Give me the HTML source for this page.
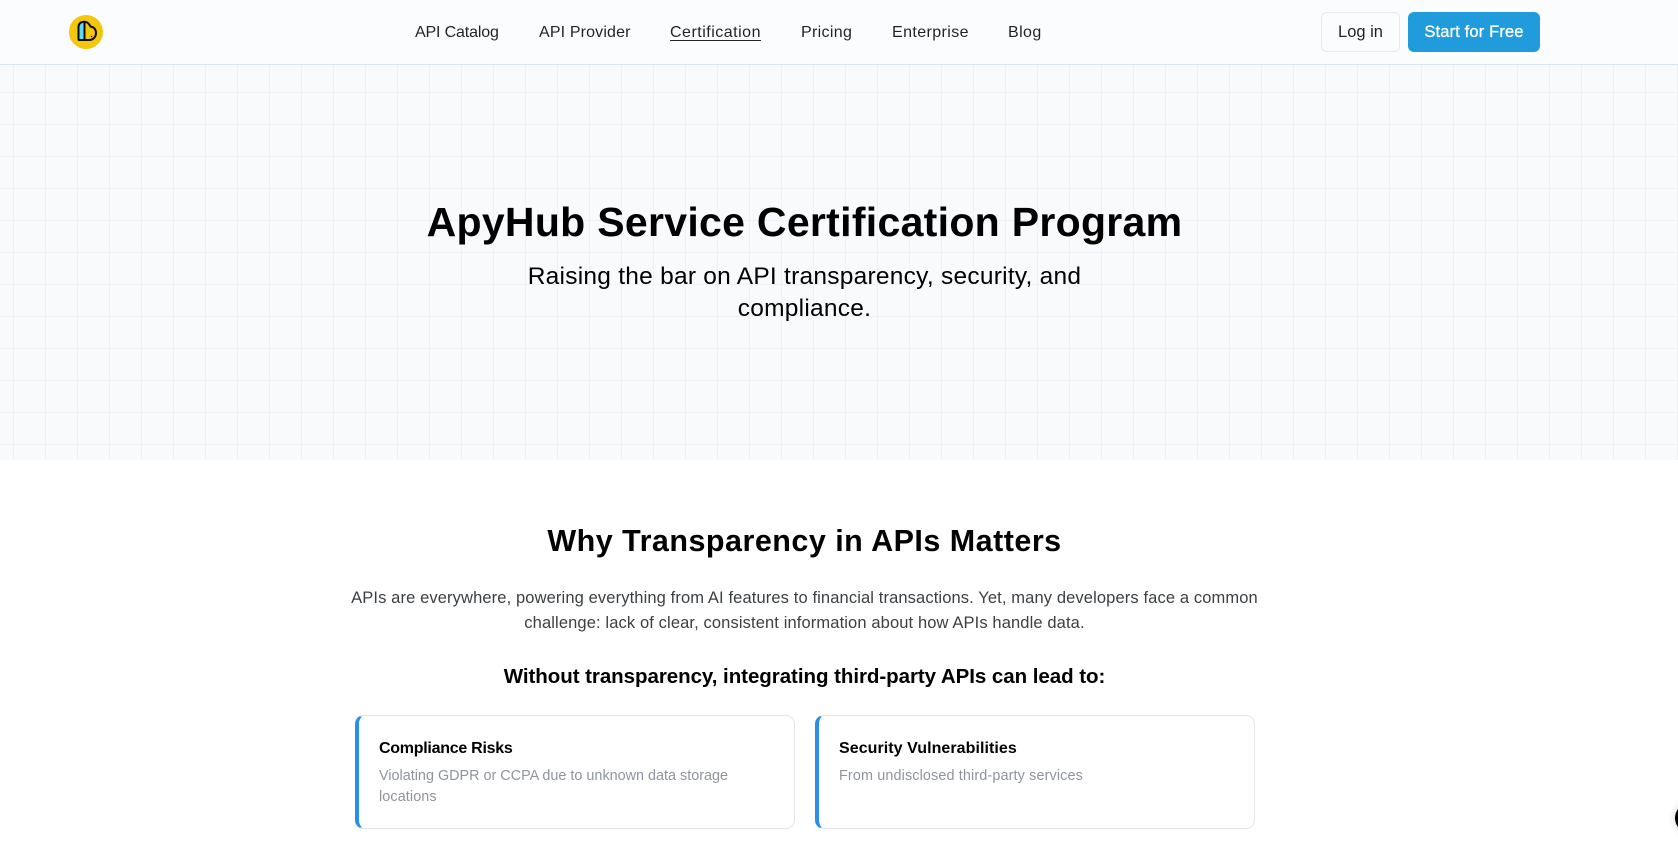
<!DOCTYPE html>
<html lang="en">
<head>
<meta charset="utf-8">
<title>ApyHub Service Certification Program</title>
<style>
html,body{margin:0;padding:0;width:1678px;height:841px;overflow:hidden;background:#fff}
body{position:relative;font-family:"Liberation Sans",Arial,sans-serif;color:#000}
.t{position:absolute;white-space:nowrap;line-height:1}
.c{left:0;width:1609px;text-align:center}
header{position:absolute;left:0;top:0;width:1678px;height:64px;background:#fbfcfe;border-bottom:1px solid #dbe5f0}
.hero{position:absolute;left:0;top:65px;width:1678px;height:395px;background-color:#f9fafc;background-image:linear-gradient(to right,#eef1f5 1px,transparent 1px),linear-gradient(to bottom,#eef1f5 1px,transparent 1px);background-size:32px 32px;background-position:13px 27px}
.nav{font-size:16px;color:#1f2328;top:25px}
.btn{position:absolute;top:12px;height:40px;box-sizing:border-box;border-radius:6px;font-size:16.5px;line-height:38px;text-align:center}
.card{position:absolute;top:715px;height:114px;box-sizing:border-box;background:#fff;border:1px solid #e1e5ec;border-left:4px solid #2b8ee8;border-radius:9px}
.ct{font-size:16px;font-weight:bold;color:#000}
.cd{font-size:14.4px;color:#8f949c}
</style>
</head>
<body>
<div class="hero"></div>
<header></header>
<svg style="position:absolute;left:69px;top:15px" width="34" height="34" viewBox="69 15 34 34">
<circle cx="86" cy="32" r="17" fill="#f4c60c"/>
<path d="M78.500 40V27C78.500 23.500 81 21.700 84.500 21.700V40Z" fill="#5fdcf5"/>
<path d="M79 40H89C93 40 96 37 96 33C96 29.500 94 27 90.500 26.500C89 23.500 87.500 21.700 84.500 21.700C81 21.700 78.500 23.500 78.500 27V39.500ZM84.500 21.700V40" fill="none" stroke="#0c0c0c" stroke-width="2" stroke-linejoin="round"/>
<circle cx="91.500" cy="36.500" r=".7" fill="#0c0c0c"/>
</svg>
<div class="t nav" style="left:415px;letter-spacing:-.15px">API Catalog</div>
<div class="t nav" style="left:539px;letter-spacing:.15px">API Provider</div>
<div class="t nav" style="left:670px;letter-spacing:.5px;text-decoration:underline;text-underline-offset:3px">Certification</div>
<div class="t nav" style="left:801px;letter-spacing:.33px">Pricing</div>
<div class="t nav" style="left:892px;letter-spacing:.4px">Enterprise</div>
<div class="t nav" style="left:1008px;letter-spacing:.4px">Blog</div>
<div class="btn" style="left:1321px;width:79px;background:#fbfcfe;border:1px solid #e6e9ef;color:#1f2328">Log in</div>
<div class="btn" style="left:1408px;width:132px;background:#209cdc;color:#fff;line-height:40px;letter-spacing:.15px;-webkit-text-stroke:.3px #fff">Start for Free</div>
<div class="t c" style="top:202px;font-size:41px;font-weight:bold;letter-spacing:.3px">ApyHub Service Certification Program</div>
<div class="t c" style="top:265px;font-size:24.500px;letter-spacing:.25px">Raising the bar on API transparency, security, and</div>
<div class="t c" style="top:297px;font-size:24.500px;letter-spacing:.25px">compliance.</div>
<div class="t c" style="top:526px;font-size:30.500px;font-weight:bold;letter-spacing:.48px">Why Transparency in APIs Matters</div>
<div class="t c" style="top:590px;font-size:16.500px;color:#3c4043;letter-spacing:.12px">APIs are everywhere, powering everything from AI features to financial transactions. Yet, many developers face a common</div>
<div class="t c" style="top:615px;font-size:16.500px;color:#3c4043;letter-spacing:.12px">challenge: lack of clear, consistent information about how APIs handle data.</div>
<div class="t c" style="top:667px;font-size:20.500px;font-weight:bold;letter-spacing:-.05px">Without transparency, integrating third-party APIs can lead to:</div>
<div class="card" style="left:355px;width:440px"></div>
<div class="card" style="left:815px;width:440px"></div>
<div class="t ct" style="left:379px;top:741px;letter-spacing:-.27px">Compliance Risks</div>
<div class="t cd" style="left:379px;top:769px">Violating GDPR or CCPA due to unknown data storage</div>
<div class="t cd" style="left:379px;top:790px;letter-spacing:.1px">locations</div>
<div class="t ct" style="left:839px;top:741px;letter-spacing:.06px">Security Vulnerabilities</div>
<div class="t cd" style="left:839px;top:769px;letter-spacing:.13px">From undisclosed third-party services</div>
<div style="position:absolute;left:1675px;top:803px;width:30px;height:30px;border-radius:50%;background:#000;box-shadow:0 0 8px rgba(0,0,0,.18)"></div>
</body>
</html>
